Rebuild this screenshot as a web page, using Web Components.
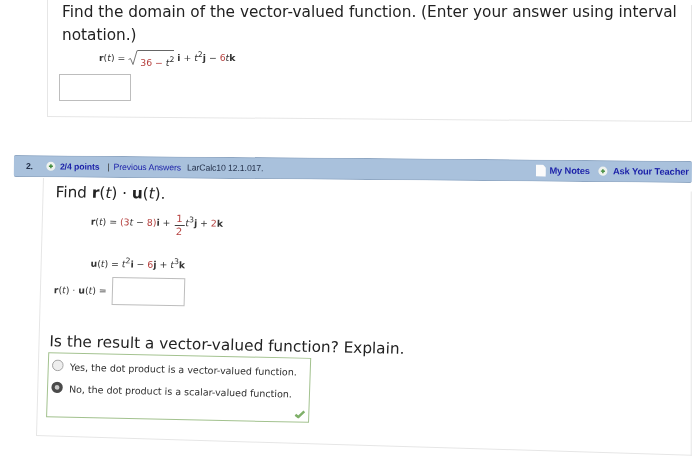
<!DOCTYPE html>
<html>
<head>
<meta charset="utf-8">
<title>Vector-valued functions</title>
<style>
  html, body { margin: 0; background: #fff; }
  body { width: 700px; height: 461px; overflow: hidden; font-family: "DejaVu Sans", Verdana, sans-serif; color: #2b2b2b; filter: blur(0.35px); }
  .r { color: #b5413f; }
</style>
</head>
<body>
<question-card class="first">
  <prompt-text>Find the domain of the vector-valued function. (Enter your answer using interval notation.)</prompt-text>
  <math-line indent="37" top="-1"><b>r</b>(<i>t</i>) = <sqrt-sign><span class="r">36 − </span><i>t</i><sup>2</sup></sqrt-sign> <b>i</b> + <i>t</i><sup>2</sup><b>j</b> − <span class="r">6</span><i>t</i><b>k</b></math-line>
  <answer-box indent="-3" top="10"></answer-box>
</question-card>

<question-bar number="2."></question-bar>

<question-card class="second">
  <prompt-text top="1">Find <b>r</b>(<i>t</i>) · <b>u</b>(<i>t</i>).</prompt-text>
  <math-line indent="36" top="5"><b>r</b>(<i>t</i>) = <span class="r">(3</span><i>t</i> − <span class="r">8)</span><b>i</b> + <frac-tion><span class="r">1</span><span class="r">2</span></frac-tion><i>t</i><sup>3</sup><b>j</b> + <span class="r">2</span><b>k</b></math-line>
  <math-line indent="37" top="24"><b>u</b>(<i>t</i>) = <i>t</i><sup>2</sup><b>i</b> − <span class="r">6</span><b>j</b> + <i>t</i><sup>3</sup><b>k</b></math-line>
  <answer-row>
    <math-line><b>r</b>(<i>t</i>) · <b>u</b>(<i>t</i>) =</math-line>
    <answer-box width="73" height="28"></answer-box>
  </answer-row>
  <prompt-text class="tilt" indent="-2" top="26">Is the result a vector-valued function? Explain.</prompt-text>
  <choice-box>
    <radio-option>Yes, the dot product is a vector-valued function.</radio-option>
    <radio-option checked>No, the dot product is a scalar-valued function.</radio-option>
  </choice-box>
</question-card>

<script>
class QuestionCard extends HTMLElement {
  constructor () {
    super()
    this.attachShadow({ mode: 'open' })
  }
  connectedCallback () {
    const first = this.classList.contains('first')
    this.shadowRoot.innerHTML = `
      <style>
        :host{
          display:block;
          position:relative;
          box-sizing:border-box;
          margin-left:${first ? 47 : 36}px;
          width:${first ? 645 : 656}px;
          height:${first ? 117 : 258}px;
          padding:${first ? '1px 0 0 15px' : '2px 0 0 13px'};
          ${first ? '' : 'transform:matrix(1,0.0148,-0.027,1,0,0);transform-origin:0 100%;'}
        }
        /* frame drawn over the content, it leans more than the text does */
        :host::after{
          content:"";
          position:absolute;
          inset:0;
          border:1px solid #e6e6e6;
          border-top:none;
          pointer-events:none;
          ${first ? 'transform:matrix(1,0.0078,0,1,0,0);transform-origin:0 100%;' : 'border-right:none;transform:matrix(1,0.0152,0,1,0,0);transform-origin:0 100%;'}
        }
        :host(.second)::before{
          content:"";
          position:absolute;
          right:0;
          top:4px;
          bottom:-10px;
          width:1px;
          background:#e6e6e6;
          transform:skewX(1.55deg);
          transform-origin:0 100%;
        }
      </style>
      <slot></slot>`
  }
}

class PromptText extends HTMLElement {
  constructor () {
    super()
    this.attachShadow({ mode: 'open' })
  }
  connectedCallback () {
    const indent = this.getAttribute('indent') || '0'
    const top = this.getAttribute('top') || '0'
    this.shadowRoot.innerHTML = `
      <style>
        :host{
          display:block;
          font-size:15.3px;
          line-height:23px;
          margin:${top}px 0 0 ${indent}px;
          color:#222;
        }
        :host(.tilt){ transform:rotate(0.4deg); transform-origin:0 0; white-space:nowrap; }
      </style>
      <slot></slot>`
  }
}

class MathLine extends HTMLElement {
  constructor () {
    super()
    this.attachShadow({ mode: 'open' })
  }
  connectedCallback () {
    const indent = this.getAttribute('indent') || '0'
    const top = this.getAttribute('top') || '0'
    this.shadowRoot.innerHTML = `
      <style>
        :host{
          display:block;
          font-size:9.3px;
          line-height:18px;
          height:18px;
          white-space:nowrap;
          margin:${top}px 0 0 ${indent}px;
          color:#333;
        }
      </style>
      <slot></slot>`
  }
}

class SqrtSign extends HTMLElement {
  constructor () {
    super()
    this.attachShadow({ mode: 'open' })
  }
  connectedCallback () {
    this.shadowRoot.innerHTML = `
      <style>
        :host{ display:inline-flex; align-items:flex-end; vertical-align:-5px; height:16px; }
        svg{ width:10px; height:16px; display:block; }
        .under{ border-top:1px solid #666; line-height:13px; padding:2px 0 0 2px; height:13px; }
      </style>
      <svg viewBox="0 0 10 16"><path d="M0.5 9.5 L2.5 8.5 L5 14.5 L9 0.7 L10 0.7" fill="none" stroke="#666" stroke-width="0.9"/></svg>
      <span class="under"><slot></slot></span>`
  }
}

class FracTion extends HTMLElement {
  constructor () {
    super()
    this.attachShadow({ mode: 'open' })
  }
  connectedCallback () {
    this.shadowRoot.innerHTML = `
      <style>
        :host{
          display:inline-grid;
          vertical-align:4px;
          line-height:13px;
          text-align:center;
          font-size:10px;
          margin:0 1px;
          grid-template-rows:13px 13px;
          width:10px;
          background:linear-gradient(#444,#444) 0 12.5px / 100% 1px no-repeat;
        }
      </style>
      <slot></slot>`
  }
}

class AnswerBox extends HTMLElement {
  constructor () {
    super()
    this.attachShadow({ mode: 'open' })
  }
  connectedCallback () {
    const width = this.getAttribute('width') || '72'
    const height = this.getAttribute('height') || '27'
    const indent = this.getAttribute('indent') || '0'
    const top = this.getAttribute('top') || '0'
    this.shadowRoot.innerHTML = `
      <style>
        :host{
          display:block;
          box-sizing:border-box;
          width:${width}px;
          height:${height}px;
          margin:${top}px 0 0 ${indent}px;
          background:#fff;
          border:1px solid #bdbdbd;
          flex:none;
        }
      </style>`
  }
}

class AnswerRow extends HTMLElement {
  constructor () {
    super()
    this.attachShadow({ mode: 'open' })
  }
  connectedCallback () {
    this.shadowRoot.innerHTML = `
      <style>
        :host{ display:flex; align-items:center; gap:5px; margin:7px 0 0 1px; }
      </style>
      <slot></slot>`
  }
}

class QuestionBar extends HTMLElement {
  constructor () {
    super()
    this.attachShadow({ mode: 'open' })
  }
  connectedCallback () {
    this.shadowRoot.innerHTML = `
      <style>
        :host{
          display:flex;
          align-items:center;
          box-sizing:border-box;
          width:678px;
          height:22px;
          margin:38px 0 1px 14px;
          padding:0 3px 0 12px;
          background:#a9c1dc;
          border-top:1px solid #8ea6c2;
          border-bottom:1px solid #8ea6c2;
          border-radius:2px;
          font:8.7px "Liberation Sans", Arial, sans-serif;
          letter-spacing:-0.1px;
          color:#23304a;
          transform:rotate(0.5deg);
          transform-origin:0 0;
          white-space:nowrap;
        }
        .num{ font-weight:bold; width:20px; }
        a{ color:#1a1fa8; text-decoration:none; }
        a.strong{ font-weight:bold; }
        .sep{ margin:0 4px 0 8px; color:#333; }
        .code{ margin-left:6px; }
        .right{ margin-left:auto; display:flex; align-items:center; font-size:9.3px; }
        .note{ width:10px; height:12px; margin-right:4px; display:block; }
        .plus{ width:10px; height:10px; display:block; margin:0 5px 0 8px; }
        .plus.left{ margin:0 4px 0 0; }
      </style>
      <span class="num">${this.getAttribute('number')}</span>
      <svg class="plus left" viewBox="0 0 11 11"><circle cx="5.5" cy="5.5" r="5" fill="#eef2ee"/><path d="M3.3 5.5H7.7M5.5 3.3V7.7" stroke="#3f8a3a" stroke-width="1.6"/></svg>
      <a class="strong">2/4 points</a>
      <span class="sep">|</span>
      <a>Previous Answers</a>
      <span class="code">LarCalc10 12.1.017.</span>
      <span class="right">
        <svg class="note" viewBox="0 0 10 12"><path d="M0 0H7L10 3V12H0Z" fill="#fbfbfb"/></svg>
        <a class="strong">My Notes</a>
        <svg class="plus" viewBox="0 0 11 11"><circle cx="5.5" cy="5.5" r="5" fill="#eef2ee"/><path d="M3.3 5.5H7.7M5.5 3.3V7.7" stroke="#3f8a3a" stroke-width="1.6"/></svg>
        <a class="strong">Ask Your Teacher</a>
      </span>`
  }
}

class ChoiceBox extends HTMLElement {
  constructor () {
    super()
    this.attachShadow({ mode: 'open' })
  }
  connectedCallback () {
    this.shadowRoot.innerHTML = `
      <style>
        :host{
          display:block;
          position:relative;
          box-sizing:border-box;
          width:263px;
          height:65px;
          margin:-1px 0 0 -3px;
          padding:1px 3px 0;
          border:1px solid #a3c28f;
          transform:rotate(0.4deg);
          transform-origin:0 0;
        }
        svg{ position:absolute; right:3px; bottom:3px; width:11px; height:9px; }
      </style>
      <slot></slot>
      <svg viewBox="0 0 15 12"><path d="M1.5 7 L5.5 10 L13.5 2" fill="none" stroke="#7fb069" stroke-width="3.4"/></svg>`
  }
}

class RadioOption extends HTMLElement {
  constructor () {
    super()
    this.attachShadow({ mode: 'open' })
  }
  connectedCallback () {
    const on = this.hasAttribute('checked')
    this.shadowRoot.innerHTML = `
      <style>
        :host{
          display:flex;
          align-items:center;
          gap:6px;
          height:22px;
          font-size:9.5px;
          color:#2f2f2f;
          white-space:nowrap;
        }
        svg{ width:12px; height:12px; flex:none; }
        span{ padding-top:2px; }
      </style>
      <svg viewBox="0 0 12 12">${on
        ? '<circle cx="6" cy="6" r="5.7" fill="#4a4a4a"/><circle cx="6" cy="6" r="2.4" fill="#c9c9c9"/>'
        : '<circle cx="6" cy="6" r="5.3" fill="#eee" stroke="#9a9a9a" stroke-width="0.9"/>'}</svg>
      <span><slot></slot></span>`
  }
}

customElements.define('question-card', QuestionCard)
customElements.define('prompt-text', PromptText)
customElements.define('math-line', MathLine)
customElements.define('sqrt-sign', SqrtSign)
customElements.define('frac-tion', FracTion)
customElements.define('answer-box', AnswerBox)
customElements.define('answer-row', AnswerRow)
customElements.define('question-bar', QuestionBar)
customElements.define('choice-box', ChoiceBox)
customElements.define('radio-option', RadioOption)
</script>
</body>
</html>
